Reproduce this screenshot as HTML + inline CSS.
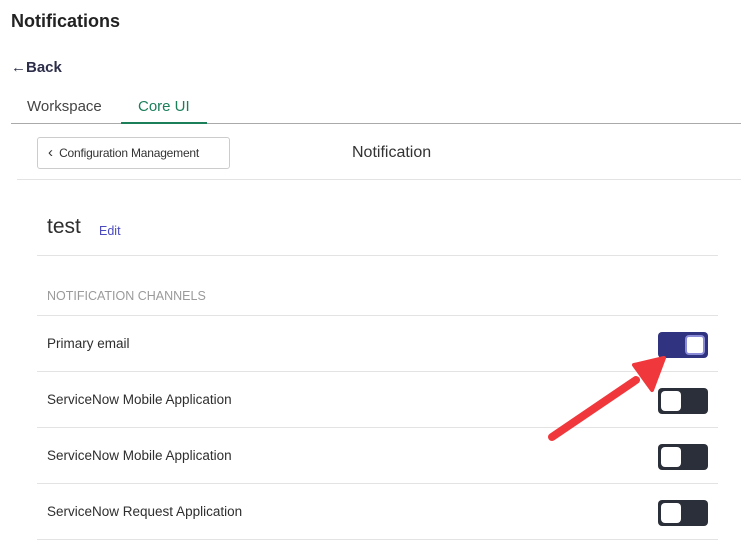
<!DOCTYPE html>
<html><head><style>
body{margin:0;width:741px;height:554px;background:#fff;font-family:"Liberation Sans",sans-serif;position:relative;overflow:hidden;color:#2e2e2e}
.a{position:absolute;white-space:nowrap}
.hr{position:absolute;height:1px;background:#e3e3e3}
.tg{position:absolute;left:658px;width:50px;height:26px;border-radius:4px;background:#2b2f3a;box-sizing:border-box}
.tg i{position:absolute;left:3px;top:3px;width:20px;height:20px;border-radius:4px;background:#fff}
.lbl{font-size:13.5px;left:47px;color:#2e2e2e}
</style></head><body>
<div class="a" style="left:11px;top:11px;font-size:18px;font-weight:bold;color:#222">Notifications</div>
<div class="a" style="left:11px;top:59px;font-size:15px;font-weight:bold;color:#2d2f4a"><span style="font-weight:normal">←</span>Back</div>
<div class="a" style="left:27px;top:98px;font-size:15px;color:#444">Workspace</div>
<div class="a" style="left:138px;top:98px;font-size:15px;color:#1b7f5a">Core UI</div>
<div class="hr" style="left:11px;top:123px;width:730px;background:#aaa"></div>
<div class="hr" style="left:121px;top:122px;width:86px;height:2px;background:#1b7f5a"></div>
<div class="a" style="left:37px;top:137px;width:193px;height:32px;border:1px solid #ccc;border-radius:3px;box-sizing:border-box;font-size:12px;line-height:30px;padding-left:10px;color:#333;letter-spacing:-0.2px"><b style="font-size:15px;font-weight:normal">‹</b>&nbsp; Configuration Management</div>
<div class="a" style="left:352px;top:144px;font-size:16px;color:#333">Notification</div>
<div class="hr" style="left:17px;top:179px;width:724px"></div>
<div class="a" style="left:47px;top:215px;font-size:21px;color:#2e2e2e">test</div>
<div class="a" style="left:99px;top:224px;font-size:12.5px;color:#4a4ac0">Edit</div>
<div class="hr" style="left:37px;top:255px;width:681px"></div>
<div class="a" style="left:47px;top:289px;font-size:12.5px;color:#9a9a9a">NOTIFICATION CHANNELS</div>
<div class="hr" style="left:37px;top:315px;width:681px"></div>
<div class="a lbl" style="top:336px">Primary email</div>
<div class="hr" style="left:37px;top:371px;width:681px"></div>
<div class="a lbl" style="top:392px">ServiceNow Mobile Application</div>
<div class="hr" style="left:37px;top:427px;width:681px"></div>
<div class="a lbl" style="top:448px">ServiceNow Mobile Application</div>
<div class="hr" style="left:37px;top:483px;width:681px"></div>
<div class="a lbl" style="top:504px">ServiceNow Request Application</div>
<div class="hr" style="left:37px;top:539px;width:681px"></div>
<div class="tg" style="top:332px;background:#30337f"><i style="left:27px;border:2px solid #8a8cd8;box-sizing:border-box"></i></div>
<div class="tg" style="top:388px"><i></i></div>
<div class="tg" style="top:444px"><i></i></div>
<div class="tg" style="top:500px"><i></i></div>
<svg class="a" style="left:0;top:0" width="741" height="554">
<line x1="552" y1="437" x2="636" y2="380" stroke="#f0383c" stroke-width="8" stroke-linecap="round"/>
<polygon points="664,358 634,365 652,390" fill="#f0383c" stroke="#f0383c" stroke-width="4" stroke-linejoin="round"/>
</svg>
</body></html>
